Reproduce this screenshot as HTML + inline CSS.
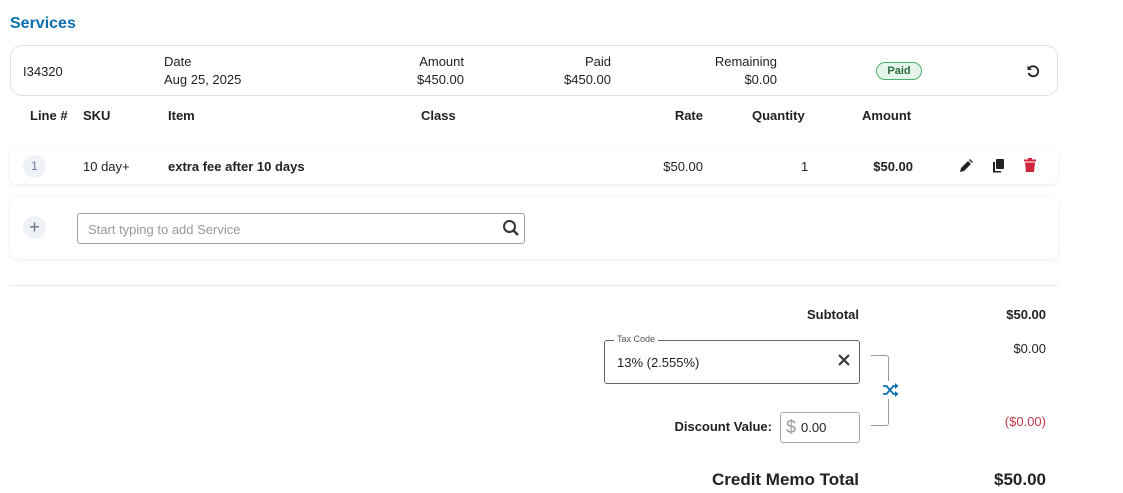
<!DOCTYPE html>
<html><head><meta charset="utf-8"><style>
*{box-sizing:border-box;margin:0;padding:0}
body{width:1123px;height:493px;background:#fff;font-family:"Liberation Sans",sans-serif;font-size:13px;color:#222;position:relative;overflow:hidden}
.a{position:absolute;white-space:nowrap;line-height:18px}
.r{text-align:right}
.b{font-weight:bold}
.card{position:absolute;left:10px;width:1048px;background:#fff;border-radius:8px}
</style></head><body>
<div class="a b" style="left:10px;top:14px;font-size:16px;color:#0b6fb0;line-height:20px">Services</div>
<div class="card" style="top:45px;height:51px;border:1px solid #dde3ea;border-radius:12px"></div>
<div class="a" style="left:23px;top:63px">I34320</div>
<div class="a" style="left:164px;top:53px">Date</div>
<div class="a" style="left:164px;top:71px">Aug 25, 2025</div>
<div class="a r" style="left:364px;width:100px;top:53px">Amount</div>
<div class="a r" style="left:364px;width:100px;top:71px">$450.00</div>
<div class="a r" style="left:511px;width:100px;top:53px">Paid</div>
<div class="a r" style="left:511px;width:100px;top:71px">$450.00</div>
<div class="a r" style="left:677px;width:100px;top:53px">Remaining</div>
<div class="a r" style="left:677px;width:100px;top:71px">$0.00</div>
<div class="a b" style="left:876px;top:62px;width:46px;height:18px;border:1px solid #4caf6e;background:#e6f5ea;border-radius:9px;color:#2a6b3e;font-size:11px;text-align:center;line-height:16px">Paid</div>
<svg class="a" style="left:1026px;top:64px" width="14" height="14" viewBox="0 0 14 14"><path d="M3 4.5A5 5 0 1 1 2.5 9" fill="none" stroke="#222" stroke-width="1.8"/><path d="M1.5 1.5V6H6z" fill="#222"/></svg>
<div class="a b" style="left:30px;top:107px">Line #</div>
<div class="a b" style="left:83px;top:107px">SKU</div>
<div class="a b" style="left:168px;top:107px">Item</div>
<div class="a b" style="left:421px;top:107px">Class</div>
<div class="a b r" style="left:603px;width:100px;top:107px">Rate</div>
<div class="a b" style="left:752px;top:107px">Quantity</div>
<div class="a b" style="left:862px;top:107px">Amount</div>
<div class="card" style="top:148px;height:36px;box-shadow:0 1px 5px rgba(0,0,0,.08)"></div>
<div class="a" style="left:23px;top:155px;width:23px;height:23px;border-radius:50%;background:#eef1f6;color:#6a7fa0;text-align:center;line-height:23px;font-size:12px">1</div>
<div class="a" style="left:83px;top:158px">10 day+</div>
<div class="a b" style="left:168px;top:158px">extra fee after 10 days</div>
<div class="a r" style="left:603px;width:100px;top:158px">$50.00</div>
<div class="a" style="left:801px;top:158px">1</div>
<div class="a b r" style="left:813px;width:100px;top:158px">$50.00</div>
<svg class="a" style="left:959px;top:159px" width="14" height="14" viewBox="0 0 14 14"><path d="M1 13l1-4 7-7 3 3-7 7z M10 1l1-1 3 3-1 1z" fill="#222"/></svg>
<svg class="a" style="left:992px;top:158px" width="13" height="15" viewBox="0 0 13 15"><rect x="4" y="1" width="8" height="10" rx="1" fill="#222"/><path d="M1 4h2v9h6v1.5H1z" fill="#222"/></svg>
<svg class="a" style="left:1024px;top:158px" width="12" height="14" viewBox="0 0 12 14"><rect x="0" y="1.5" width="12" height="2" fill="#d0253a"/><rect x="4" y="0" width="4" height="2" fill="#d0253a"/><path d="M1 4.5h10l-1 9.5H2z" fill="#d0253a"/></svg>
<div class="card" style="top:197px;height:62px;box-shadow:0 1px 5px rgba(0,0,0,.08)"></div>
<div class="a" style="left:23px;top:216px;width:23px;height:23px;border-radius:50%;background:#eef1f6;color:#6a7080;text-align:center;line-height:22px;font-size:18px">+</div>
<div class="a" style="left:77px;top:213px;width:448px;height:31px;border:1px solid #9aa0a8;border-radius:3px"></div>
<div class="a" style="left:88px;top:221px;color:#999">Start typing to add Service</div>
<svg class="a" style="left:502px;top:219px" width="18" height="18" viewBox="0 0 18 18"><circle cx="7.5" cy="7.5" r="5.5" fill="none" stroke="#333" stroke-width="2"/><path d="M11.5 11.5L16 16" stroke="#333" stroke-width="2.4"/></svg>
<div class="a" style="left:10px;top:285px;width:1048px;height:1px;background:#e6e9ee"></div>
<div class="a b r" style="left:700px;width:159px;top:306px">Subtotal</div>
<div class="a b r" style="left:946px;width:100px;top:306px">$50.00</div>
<div class="a" style="left:604px;top:340px;width:256px;height:44px;border:1px solid #666;border-radius:3px"></div>
<div class="a" style="left:614px;top:333px;background:#fff;padding:0 3px;font-size:9px;color:#555;line-height:12px">Tax Code</div>
<div class="a" style="left:617px;top:354px">13% (2.555%)</div>
<svg class="a" style="left:838px;top:354px" width="12" height="12" viewBox="0 0 12 12"><path d="M1 1L11 11M11 1L1 11" stroke="#333" stroke-width="2"/></svg>
<div class="a r" style="left:946px;width:100px;top:340px">$0.00</div>
<div class="a" style="left:871px;top:355px;width:18px;height:71px;border:1px solid #999;border-left:none;border-radius:0 3px 3px 0"></div>
<div class="a" style="left:881px;top:381px;width:18px;height:18px;background:#fff"></div>
<svg class="a" style="left:882px;top:383px" width="17" height="14" viewBox="0 0 17 14"><path d="M1 3h3.5l7 8H14M1 11h3.5l7-8H14" fill="none" stroke="#0b6fb0" stroke-width="1.8"/><path d="M13 0l3.5 3L13 6zM13 8l3.5 3L13 14z" fill="#0b6fb0"/></svg>
<div class="a b r" style="left:600px;width:172px;top:418px">Discount Value:</div>
<div class="a" style="left:780px;top:412px;width:80px;height:31px;border:1px solid #aaa;border-radius:3px"></div>
<div class="a" style="left:786px;top:416px;font-size:18px;color:#999;line-height:22px">$</div>
<div class="a" style="left:801px;top:419px">0.00</div>
<div class="a r" style="left:946px;width:100px;top:413px;color:#c0394a">($0.00)</div>
<div class="a b r" style="left:600px;width:259px;top:470px;font-size:17px;line-height:20px">Credit Memo Total</div>
<div class="a b r" style="left:946px;width:100px;top:470px;font-size:17px;line-height:20px">$50.00</div>
</body></html>
